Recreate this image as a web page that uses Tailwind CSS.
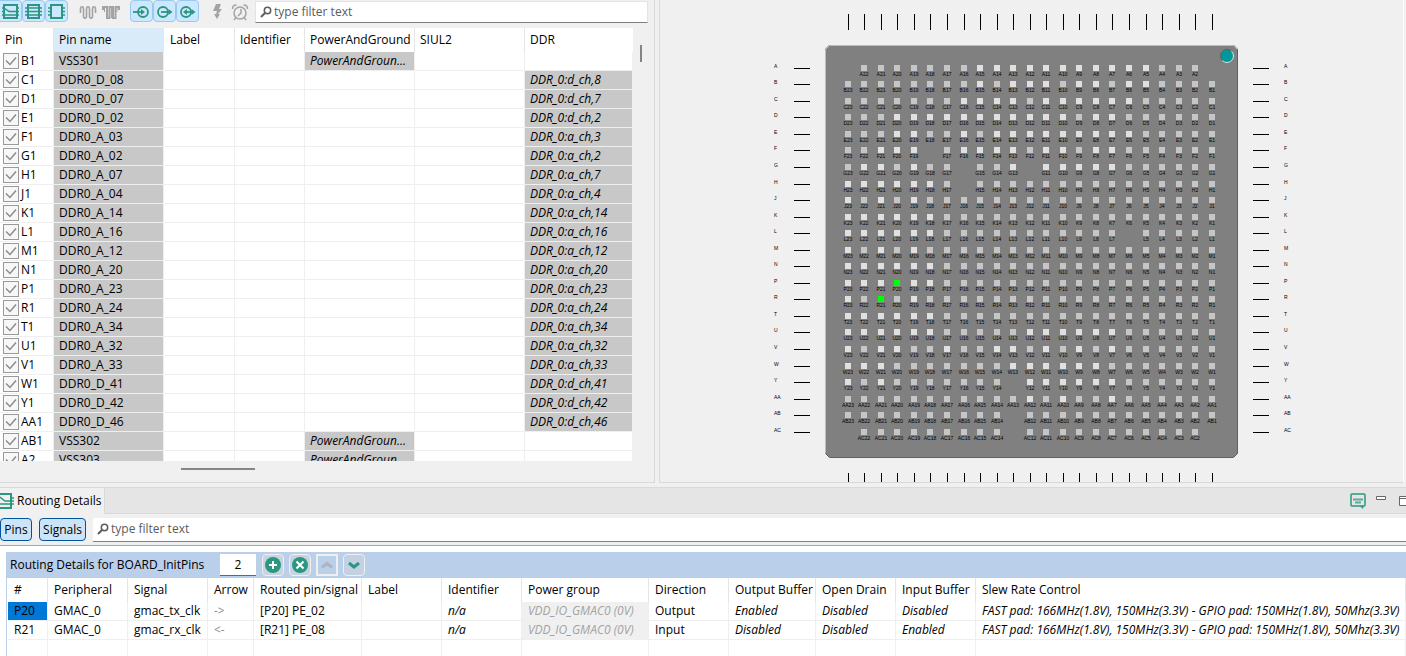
<!DOCTYPE html>
<html lang="en">
<head>
  <meta charset="UTF-8" />
  <meta name="viewport" content="width=device-width, initial-scale=1.0" />
  <title>Pins Tool</title>
  <script src="https://cdn.jsdelivr.net/npm/@tailwindcss/browser@4"></script>
</head>
<body class="flex flex-col h-screen overflow-hidden bg-[#f0f0f0] text-black text-[12px] leading-[18px] font-['Open_Sans','Noto_Sans',sans-serif]">

  <!-- Top: pins table + package view -->
  <main class="flex flex-1 min-h-0 gap-1 pb-1">

    <!-- Pins table -->
    <section class="flex flex-col w-[655px] shrink-0 border-r border-b border-[#d9d9d9]">
      <div class="flex items-start h-7 shrink-0">
        <div class="flex h-[22px] w-[68px] shrink-0">
          <button type="button" aria-label="Show routed pins" class="w-[22px] h-[22px] rounded-r-sm border border-l-0 border-[#99c9ef] bg-[#cce8ff]">
            <svg class="w-5 h-5" viewBox="0 0 20 20" fill="none" stroke="#2b9780" stroke-width="2"><path d="M4 4h13v13H4z"/><path d="M2 7h2M2 10.500h2M2 14h2M17 7h2M17 10.500h2M17 14h2M4 7l5 3.500h8M4 14h13" stroke-width="1.500"/></svg>
          </button>
          <button type="button" aria-label="Show all pins" class="w-[23px] h-[22px] rounded-sm border border-[#99c9ef] bg-[#cce8ff]">
            <svg class="w-5 h-5" viewBox="0 0 20 20" fill="none" stroke="#2b9780" stroke-width="2"><path d="M5 4h11v13H5z"/><path d="M2 7h17M2 10.500h17M2 14h17" stroke-width="1.500"/></svg>
          </button>
          <button type="button" aria-label="Show unrouted pins" class="w-[23px] h-[22px] rounded-sm border border-[#99c9ef] bg-[#cce8ff]">
            <svg class="w-5 h-5" viewBox="0 0 20 20" fill="none" stroke="#2b9780" stroke-width="2"><path d="M5 4h11v13H5z"/><path d="M2 7h3M2 10.500h3M2 14h3M16 7h3M16 10.500h3M16 14h3" stroke-width="1.500"/></svg>
          </button>
        </div>
        <div class="flex ml-[10px] w-[52px] shrink-0 text-[#a3a3a3]">
          <button type="button" aria-label="Analog" class="w-[23px] h-[22px]">
            <svg class="w-5 h-5" viewBox="0 0 20 20" fill="none" stroke="currentColor" stroke-width="1.600"><path d="M2.500 12V8c0-3 3-3 3 0v7c0 3 3 3 3 0V8c0-3 3-3 3 0v7c0 3 3 3 3 0V8c0-3 3-3 3 0v4"/></svg>
          </button>
          <button type="button" aria-label="Digital" class="w-[23px] h-[22px]">
            <svg class="w-5 h-5" viewBox="0 0 20 20" fill="none" stroke="currentColor" stroke-width="2"><path d="M2 9V6h4v11h2.500V6h3.500v11h2.500V6h3.500v3"/><path d="M3.500 6v5M10.500 6v11M16 6v5" stroke-width="1"/></svg>
          </button>
        </div>
        <div class="flex h-[22px] shrink-0">
          <button type="button" aria-label="Input pins" class="w-[23px] h-[22px] rounded-sm border border-[#99c9ef] bg-[#cce8ff]">
            <svg class="w-5 h-5" viewBox="0 0 20 20" fill="none" stroke="#2b9780" stroke-width="1.800"><circle cx="12" cy="11" r="5"/><path d="M2 11h9"/><path d="M10 8l4 3-4 3z" fill="#2b9780" stroke="none"/></svg>
          </button>
          <button type="button" aria-label="Output pins" class="w-[23px] h-[22px] rounded-sm border border-[#99c9ef] bg-[#cce8ff]">
            <svg class="w-5 h-5" viewBox="0 0 20 20" fill="none" stroke="#2b9780" stroke-width="1.800"><circle cx="9" cy="11" r="5"/><path d="M7 11h9"/><path d="M14.500 8l4 3-4 3z" fill="#2b9780" stroke="none"/></svg>
          </button>
          <button type="button" aria-label="Bidirectional pins" class="w-[23px] h-[22px] rounded-sm border border-[#99c9ef] bg-[#cce8ff]">
            <svg class="w-5 h-5" viewBox="0 0 20 20" fill="none" stroke="#2b9780" stroke-width="1.800"><circle cx="9" cy="11" r="5"/><path d="M8 11h8"/><path d="M14.500 8l4 3-4 3zM10 8l-4 3 4 3z" fill="#2b9780" stroke="none"/></svg>
          </button>
        </div>
        <div class="flex ml-2 w-[48px] shrink-0 text-[#a3a3a3]">
          <button type="button" aria-label="Power" class="w-[23px] h-[22px]">
            <svg class="w-5 h-5" viewBox="0 0 20 20" fill="currentColor"><path d="M9 3h5l-2 5h3l-4 5h2l-3 5-3-5h2l1-3H6z"/></svg>
          </button>
          <button type="button" aria-label="Clocks" class="w-[23px] h-[22px]">
            <svg class="w-5 h-5" viewBox="0 0 20 20" fill="none" stroke="currentColor" stroke-width="1.500"><circle cx="10" cy="12" r="6"/><path d="M11 8v4l-3 3M2.500 8C2.500 5.500 4 4 6.500 4M17.500 8C17.500 5.500 16 4 13.500 4M6 16.500l-2 2.500M14 16.500l2 2.500"/></svg>
          </button>
        </div>
        <label class="flex items-center gap-[2px] h-[22px] pl-1 mt-[1px] mr-[6px] flex-1 bg-white border border-[#e3e3e3] border-b-[#808080]">
          <svg class="w-3 h-3 shrink-0" viewBox="0 0 12 12" fill="none" stroke="#5c5c5c" stroke-width="1.500"><circle cx="7.500" cy="4.500" r="3.200"/><path d="M5 7L1 11" stroke-width="2"/></svg>
          <input type="text" aria-label="Filter pins" placeholder="type filter text" class="flex-1 min-w-0 outline-none placeholder:text-[#5c5c5c]">
        </label>
      </div>

      <div class="flex flex-1 min-h-0">
        <div class="w-[633px] shrink-0 mb-[22px] overflow-hidden bg-white">
          <table class="w-full table-fixed border-separate border-spacing-0 text-left whitespace-nowrap">
            <colgroup>
              <col class="w-[54px]"><col class="w-[110px]"><col class="w-[71px]"><col class="w-[70px]"><col class="w-[110px]"><col class="w-[110px]"><col>
            </colgroup>
            <thead>
              <tr class="h-6">
                <th class="p-0 pl-[5px] font-normal border-r border-[#e5e5e5]">Pin</th>
                <th class="p-0 pl-[5px] font-normal bg-[#d9ebf9]">Pin name</th>
                <th class="p-0 pl-[6px] font-normal border-r border-[#e5e5e5]">Label</th>
                <th class="p-0 pl-[5px] font-normal border-r border-[#e5e5e5]">Identifier</th>
                <th class="p-0 pl-[5px] font-normal border-r border-[#e5e5e5]">PowerAndGround</th>
                <th class="p-0 pl-[5px] font-normal border-r border-[#e5e5e5]">SIUL2</th>
                <th class="p-0 pl-[5px] font-normal">DDR</th>
              </tr>
            </thead>
            <tbody id="pinRows"></tbody>
          </table>
        </div>
        <!-- vertical scroll thumb -->
        <div class="ml-[7px] mt-[17px] w-[2px] h-[17px] bg-[#858585]"></div>
      </div>
      <!-- horizontal scroll thumb -->
      <div class="-mt-[15px] mb-[12px] ml-[181px] w-[74px] h-[2px] shrink-0 bg-[#858585]"></div>
    </section>

    <!-- Package view -->
    <section class="flex flex-1 justify-center min-w-0 mr-[2px] overflow-hidden border-l border-b border-r border-[#d9d9d9] border-r-white">
      <svg id="chip" class="w-[524px] h-[482px] shrink-0 text-[5px] font-['Liberation_Sans',sans-serif]" viewBox="0 0 524 482">
        <path d="M59 45h405l4 4v404l-4 4H59l-4-4V49z" fill="#808080"/>
        <path d="M55.500 453V49.500l4-4h404l4 4" fill="none" stroke="#bdbdbd"/>
        <path d="M467.500 49.500v404l-4 4h-404l-4-4" fill="none" stroke="#5f5f5f"/>
        <circle cx="457" cy="56" r="6.500" fill="#009999"/>
        <path d="M452.400 60.600a6.500 6.500 0 0 1 9.200-9.200" fill="none" stroke="#5f5f5f"/>
        <path d="M461.600 51.400a6.500 6.500 0 0 1-9.200 9.200" fill="none" stroke="#e0e0e0"/>
      </svg>
    </section>
  </main>

  <!-- Bottom: routing details -->
  <section class="flex flex-col h-[169px] shrink-0 border-t border-[#d9d9d9]">
    <div class="flex items-center h-[26px] shrink-0 bg-[#e5e5e5] border-b border-[#d9d9d9]">
      <div class="flex items-center w-[105px] h-[26px] shrink-0 bg-[#f0f0f0] border-r border-[#d9d9d9]">
        <svg class="w-[14px] h-4 mr-[3px] shrink-0" viewBox="0 0 14 16" fill="none" stroke="#2b9780" stroke-width="2"><path d="M0 1h11v14H0"/><path d="M0 4l5 4h9M0 11h14M11 5h3" stroke-width="1.500"/></svg>
        Routing Details
      </div>
      <div class="flex items-center ml-auto h-full shrink-0">
        <button type="button" aria-label="Show description" class="w-4 h-4">
          <svg class="w-4 h-4" viewBox="0 0 16 16" fill="none" stroke="#2b9780" stroke-width="1.500"><rect x="1" y="1" width="14" height="12" rx="1"/><path d="M3 6.500h10M5 9.500h6" stroke-width="2" stroke="#5aae9b"/><path d="M10.500 13.500h2v2"/></svg>
        </button>
        <button type="button" aria-label="Minimize" class="w-[10px] h-4 ml-[10px]">
          <svg class="w-[10px] h-4" viewBox="0 0 10 16" fill="#fff" stroke="#666"><path d="M.5 3.500h9v3h-9z"/></svg>
        </button>
        <button type="button" aria-label="Maximize" class="w-[7px] h-4 ml-[13px] overflow-hidden">
          <svg class="w-[10px] h-4 max-w-none" viewBox="0 0 10 16" fill="#fff" stroke="#666"><path d="M.5 3.500h9v9h-9zM0 5.500h10"/></svg>
        </button>
      </div>
    </div>
    <div class="flex items-center h-[32px] shrink-0 border-b border-[#a8a8a8]">
      <button type="button" class="w-8 h-[23px] rounded border border-[#00549e] bg-[#cce4f7]">Pins</button>
      <button type="button" class="w-[47px] h-[23px] ml-[7px] rounded border border-[#00549e] bg-[#cce4f7]">Signals</button>
      <label class="flex items-center gap-[2px] h-6 pl-1 ml-[7px] flex-1 bg-white border-b border-[#808080]">
        <svg class="w-3 h-3 shrink-0" viewBox="0 0 12 12" fill="none" stroke="#5c5c5c" stroke-width="1.500"><circle cx="7.500" cy="4.500" r="3.200"/><path d="M5 7L1 11" stroke-width="2"/></svg>
        <input type="text" aria-label="Filter routed pins" placeholder="type filter text" class="flex-1 min-w-0 outline-none placeholder:text-[#5c5c5c]">
      </label>
    </div>
    <div class="flex-1 min-h-0 overflow-hidden bg-white pt-[6px] pl-[6px]">
      <div class="flex items-center h-[26px] pl-1 bg-[#b9cfea]">
        <label for="routeCount" class="w-[210px] shrink-0">Routing Details for BOARD_InitPins</label>
        <input id="routeCount" type="text" value="2" class="w-9 h-[22px] bg-white border-b border-[#666] text-center outline-none">
        <div class="flex gap-[5px] ml-[6px]">
          <button type="button" aria-label="Add" class="w-[22px] h-[22px] border border-[#efefef] rounded-sm bg-[#c8d4e2]">
            <svg class="w-5 h-5" viewBox="0 0 20 20" fill="none" stroke="#fff" stroke-width="2"><circle cx="10" cy="10" r="8" fill="#2b9780" stroke="none"/><path d="M10 6v8M6 10h8"/></svg>
          </button>
          <button type="button" aria-label="Delete" class="w-[22px] h-[22px] border border-[#efefef] rounded-sm bg-[#c8d4e2]">
            <svg class="w-5 h-5" viewBox="0 0 20 20" fill="none" stroke="#fff" stroke-width="2"><circle cx="10" cy="10" r="8" fill="#2b9780" stroke="none"/><path d="M6.500 6.500l7 7M13.500 6.500l-7 7"/></svg>
          </button>
          <button type="button" aria-label="Move up" class="w-[22px] h-[22px] border-2 border-[#efefef] bg-[#b9cfea]">
            <svg class="w-[18px] h-[18px]" viewBox="0 0 18 18" fill="none" stroke="#b0b5bb" stroke-width="3"><path d="M4 11.500l5-4 5 4"/></svg>
          </button>
          <button type="button" aria-label="Move down" class="w-[22px] h-[22px] border border-[#efefef] rounded-sm bg-[#c3d1e2]">
            <svg class="w-5 h-5" viewBox="0 0 20 20" fill="none" stroke="#2b9780" stroke-width="3"><path d="M5 8l5 4 5-4"/></svg>
          </button>
        </div>
      </div>
      <div class="border-l border-[#b9cfea] pl-[1px]">
        <table class="w-full table-fixed border-separate border-spacing-0 text-left whitespace-nowrap">
          <colgroup>
            <col class="w-[40px]"><col class="w-[80px]"><col class="w-[80px]"><col class="w-[46px]"><col class="w-[108px]"><col class="w-[80px]"><col class="w-[80px]"><col class="w-[127px]"><col class="w-[80px]"><col class="w-[87px]"><col class="w-[80px]"><col class="w-[80px]"><col>
          </colgroup>
          <thead><tr id="routeHead" class="h-6"></tr></thead>
          <tbody id="routeRows"></tbody>
        </table>
      </div>
    </div>
  </section>

  <script>
    // ---- pins table ----
    const pins = [
      ["B1", "VSS301", ""], ["C1", "DDR0_D_08", "d_ch,8"], ["D1", "DDR0_D_07", "d_ch,7"],
      ["E1", "DDR0_D_02", "d_ch,2"], ["F1", "DDR0_A_03", "a_ch,3"], ["G1", "DDR0_A_02", "a_ch,2"],
      ["H1", "DDR0_A_07", "a_ch,7"], ["J1", "DDR0_A_04", "a_ch,4"], ["K1", "DDR0_A_14", "a_ch,14"],
      ["L1", "DDR0_A_16", "a_ch,16"], ["M1", "DDR0_A_12", "a_ch,12"], ["N1", "DDR0_A_20", "a_ch,20"],
      ["P1", "DDR0_A_23", "a_ch,23"], ["R1", "DDR0_A_24", "a_ch,24"], ["T1", "DDR0_A_34", "a_ch,34"],
      ["U1", "DDR0_A_32", "a_ch,32"], ["V1", "DDR0_A_33", "a_ch,33"], ["W1", "DDR0_D_41", "d_ch,41"],
      ["Y1", "DDR0_D_42", "d_ch,42"], ["AA1", "DDR0_D_46", "d_ch,46"], ["AB1", "VSS302", ""], ["A2", "VSS303", ""]
    ];
    const cell = "p-0 pl-[5px] border-b border-r border-[#efefef] overflow-hidden";
    document.getElementById("pinRows").innerHTML = pins.map(([pin, name, ddr]) => `
      <tr class="h-[19px]">
        <td class="p-0 pl-[3px] border-b border-r border-[#efefef]">
          <label class="flex items-center gap-[2px] h-[18px]">
            <span class="grid w-4 h-4 shrink-0">
              <input type="checkbox" checked class="appearance-none w-4 h-4 col-start-1 row-start-1 border border-[#999] bg-[#f7f7f7]">
              <svg class="w-4 h-4 col-start-1 row-start-1 pointer-events-none" viewBox="0 0 16 16" fill="none" stroke="#8c8c8c" stroke-width="1.500"><path d="M3 7.500l4 4 6-7"/></svg>
            </span>${pin}
          </label>
        </td>
        <td class="${cell} bg-[#c8c8c8]">${name}</td>
        <td class="${cell}"></td>
        <td class="${cell}"></td>
        <td class="${cell} italic ${ddr ? "" : "bg-[#c8c8c8]"}">${ddr ? "" : "PowerAndGroun..."}</td>
        <td class="${cell}"></td>
        <td class="${cell} italic ${ddr ? "bg-[#c8c8c8]" : ""}">${ddr ? "DDR_0:" + ddr : ""}</td>
      </tr>`).join("");

    // ---- routing details table ----
    const heads = ["#", "Peripheral", "Signal", "Arrow", "Routed pin/signal", "Label", "Identifier", "Power group", "Direction", "Output Buffer", "Open Drain", "Input Buffer", "Slew Rate Control"];
    const slew = "FAST pad: 166MHz(1.8V), 150MHz(3.3V) - GPIO pad: 150MHz(1.8V), 50Mhz(3.3V)";
    const routes = [
      ["P20", "GMAC_0", "gmac_tx_clk", "-&gt;", "[P20] PE_02", "", "n/a", "VDD_IO_GMAC0 (0V)", "Output", "Enabled", "Disabled", "Disabled", slew],
      ["R21", "GMAC_0", "gmac_rx_clk", "&lt;-", "[R21] PE_08", "", "n/a", "VDD_IO_GMAC0 (0V)", "Input", "Disabled", "Disabled", "Enabled", slew],
      ["", "", "", "", "", "", "", "", "", "", "", "", ""]
    ];
    const italicCols = [6, 7, 9, 10, 11, 12];
    document.getElementById("routeHead").innerHTML = heads.map(h =>
      `<th class="p-0 pl-[6px] font-normal border-r border-[#e5e5e5]">${h}</th>`).join("");
    document.getElementById("routeRows").innerHTML = routes.map((row, r) =>
      `<tr class="h-[19px]">` + row.map((text, c) => {
        let cls = "p-0 pl-[6px] border-b border-r border-[#efefef]";
        if (italicCols.includes(c)) cls += " italic";
        if (c === 3) cls += " text-[#8c8c8c]";
        if (c === 7 && text) cls += " bg-[#f0f0f0] text-[#a3a3a3]";
        if (c === 0 && r === 0) cls += " bg-[#0078d7]";
        return `<td class="${cls}">${text}</td>`;
      }).join("") + `</tr>`).join("");

    // ---- package: balls from column 23 down to 1 ----
    // . = no ball, o = dedicated, w = routable, g = routed
    const balls = {
      A:  ".ooooooowwwwwwwwwwwooo.",
      B:  "oooooooowowwwowwowwoooo",
      C:  "ooooooowwwwowwwwwwooooo",
      D:  "ooowwwwwwwwwwwowwoooooo",
      E:  "ooowwoowowwwwwwwwwooooo",
      F:  "oowww.owwwwowwowwoooooo",
      G:  "owwowoo.oow.wwwwwoooooo",
      H:  "wwwwwwo.ooooooooooooooo",
      J:  "wowowoooooooooooooooooo",
      K:  "wwwwwwooooooooooooooooo",
      L:  "wwwwwwooooooooooo.ooooo",
      M:  "wowowoooooooooooooooooo",
      N:  "wwwwwwooooooooooooooooo",
      P:  "wwwgwwooooooooooooooooo",
      R:  "wogowoooooooooooooooooo",
      T:  "wwwwwwooooooooooooooooo",
      U:  "wwwwwwooooowwwwwwoooooo",
      V:  "wowwoowoowwowowowoooooo",
      W:  "wwwooooooowwwwwwooooooo",
      Y:  "wowooooooo.wwwwwwoooooo",
      AA: "ooooooooooowowoowoooooo",
      AB: "oooooooooo.oooooooooooo",
      AC: ".ooooooooo.ooooooooooo."
    };
    const fills = { o: "#c6c6c6", w: "#e0e0e0", g: "#00ff00" };
    const pitch = 364 / 22;
    let out = "";
    for (let i = 0; i < 23; i++) {
      const x = Math.floor(78.2 + i * pitch);
      out += `<rect x="${x}" y="14" width="1" height="16"/><rect x="${x}" y="473" width="1" height="9"/>`;
    }
    Object.keys(balls).forEach((row, r) => {
      const y = Math.floor(68.2 + r * pitch);
      out += `<rect x="24" y="${y}" width="16" height="1"/><rect x="483" y="${y}" width="16" height="1"/>`;
      out += `<text x="4" y="${y}">${row}</text><text x="514" y="${y}">${row}</text>`;
      for (let c = 0; c < 23; c++) {
        const kind = balls[row][c];
        if (kind === ".") continue;
        const x = Math.floor(78.2 + c * pitch);
        out += `<rect x="${x - 3}" y="${y - 3}" width="6" height="6" fill="${fills[kind]}"/>`;
        out += `<text x="${x}" y="${y + 8}" text-anchor="middle">${row}${23 - c}</text>`;
      }
    });
    document.getElementById("chip").insertAdjacentHTML("beforeend", out);
  </script>

</body>
</html>
